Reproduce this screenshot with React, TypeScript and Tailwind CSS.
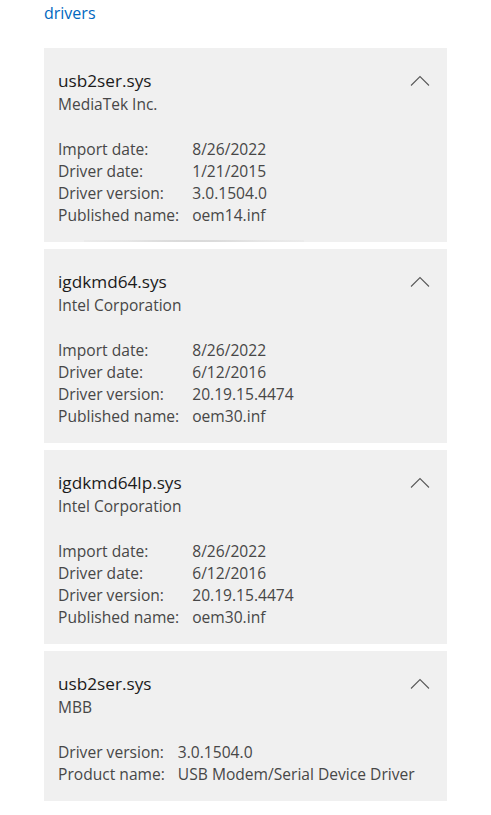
import React from 'react';

type Row = { label: string; value: string };

interface DriverCardProps {
    file: string;
    vendor: string;
    rows: Row[];
    shadow?: boolean;
}

const drivers: DriverCardProps[] = [
    {
        file: 'usb2ser.sys',
        vendor: 'MediaTek Inc.',
        shadow: true,
        rows: [
            { label: 'Import date:', value: '8/26/2022' },
            { label: 'Driver date:', value: '1/21/2015' },
            { label: 'Driver version:', value: '3.0.1504.0' },
            { label: 'Published name:', value: 'oem14.inf' },
        ],
    },
    {
        file: 'igdkmd64.sys',
        vendor: 'Intel Corporation',
        rows: [
            { label: 'Import date:', value: '8/26/2022' },
            { label: 'Driver date:', value: '6/12/2016' },
            { label: 'Driver version:', value: '20.19.15.4474' },
            { label: 'Published name:', value: 'oem30.inf' },
        ],
    },
    {
        file: 'igdkmd64lp.sys',
        vendor: 'Intel Corporation',
        rows: [
            { label: 'Import date:', value: '8/26/2022' },
            { label: 'Driver date:', value: '6/12/2016' },
            { label: 'Driver version:', value: '20.19.15.4474' },
            { label: 'Published name:', value: 'oem30.inf' },
        ],
    },
    {
        file: 'usb2ser.sys',
        vendor: 'MBB',
        rows: [
            { label: 'Driver version:', value: '3.0.1504.0' },
            { label: 'Product name:', value: 'USB Modem/Serial Device Driver' },
        ],
    },
];

const ChevronUp = () => (
    <svg width="20" height="12" viewBox="0 0 20 12" fill="none" className="text-[#5a5a5a]">
        <path d="M1 10.5 L10 1.5 L19 10.5" stroke="currentColor" strokeWidth="1.1" />
    </svg>
);

const DriverCard: React.FC<DriverCardProps> = ({ file, vendor, rows, shadow }) => (
    <div className="relative bg-[#f0f0f0] pl-[14px] pr-[17px] pt-[21px] pb-[16px]">
        <div className="flex items-start justify-between">
            <div>
                <div className="text-[17.2px] leading-[24px] text-[#1b1b1b]">{file}</div>
                <div className="text-[15.5px] leading-[22px] text-[#474747]">{vendor}</div>
            </div>
            <div className="pt-[6px]">
                <ChevronUp />
            </div>
        </div>
        <div className="mt-[23px] grid grid-cols-[auto_1fr] gap-x-[13px] text-[15.6px] leading-[22px] text-[#474747]">
            {rows.map((r) => (
                <React.Fragment key={r.label}>
                    <div>{r.label}</div>
                    <div>{r.value}</div>
                </React.Fragment>
            ))}
        </div>
        {shadow && (
            <div className="absolute bottom-0 left-[40px] h-[2px] w-[220px] bg-[radial-gradient(ellipse_at_center,#c4c4c4_0%,#e6e6e6_55%,transparent_100%)]" />
        )}
    </div>
);

export default function App() {
    return (
        <div
            className="min-h-screen bg-white px-[44px] pb-[14px]"
            style={{ fontFamily: '"Open Sans", "Noto Sans", sans-serif' }}
        >
            <div className="pt-[2px] text-[16px] leading-[22px] text-[#0067c0]">drivers</div>
            <div className="mt-[24px] flex flex-col gap-[7px]">
                {drivers.map((d, i) => (
                    <DriverCard key={i} {...d} />
                ))}
            </div>
        </div>
    );
}
